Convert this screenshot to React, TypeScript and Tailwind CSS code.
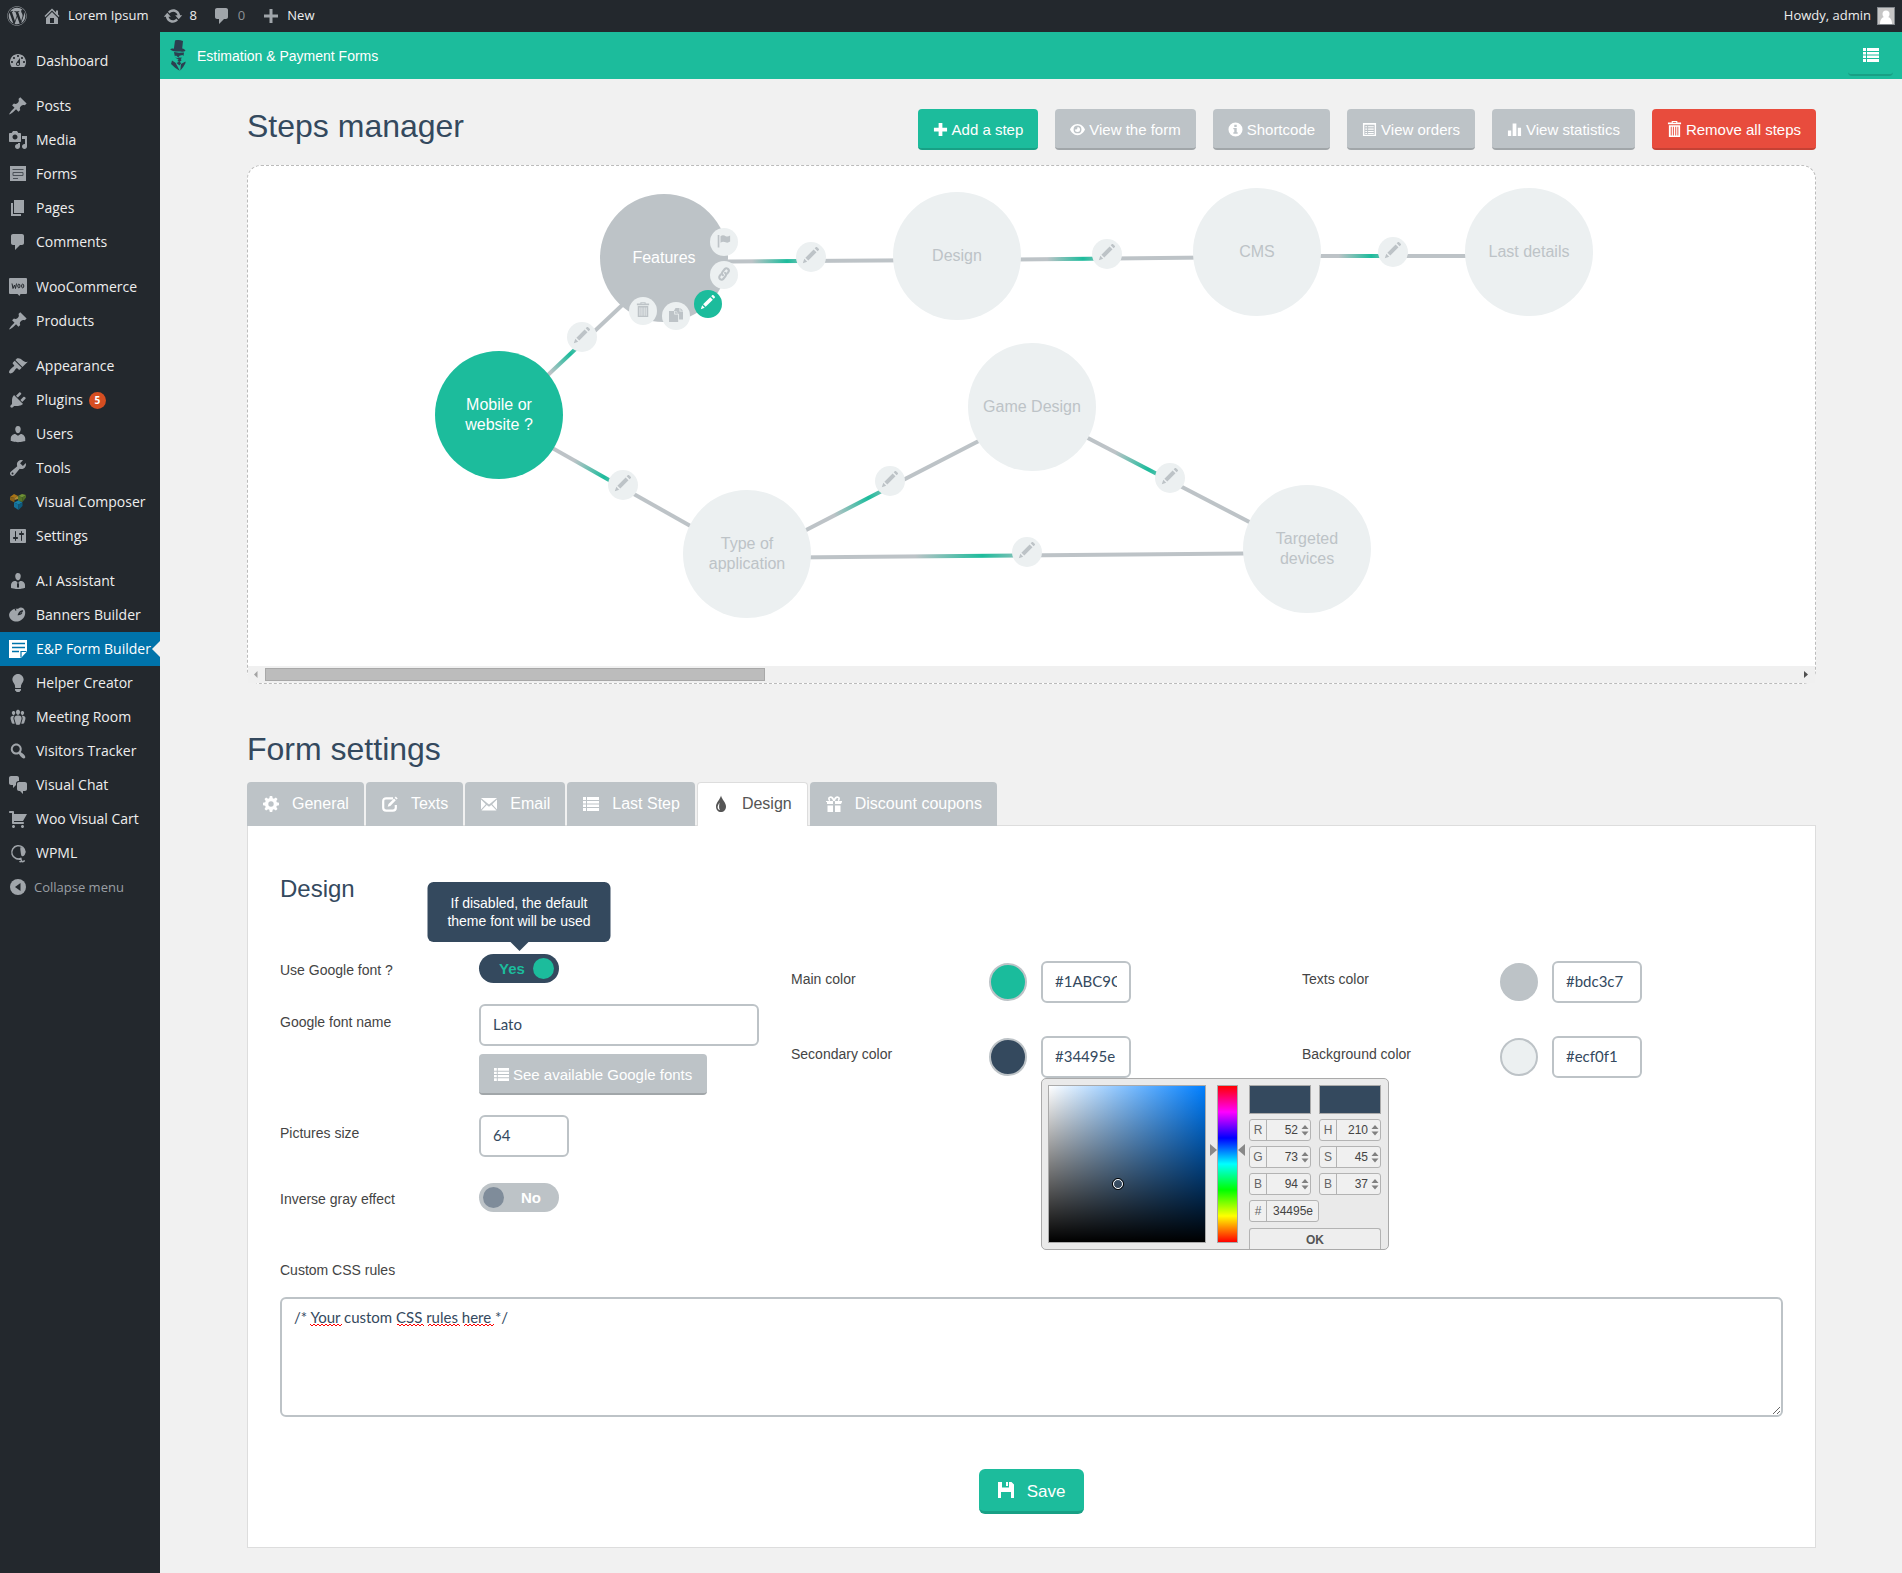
import { useState, type ReactNode } from "react";
import { FaWordpress } from "react-icons/fa";

/* ---------- sidebar icons, drawn on a 20 x 20 grid ---------- */

const DASH = {
  dashboard:
    "M3.76 16h12.48c1.1-1.37 1.76-3.11 1.76-5 0-4.42-3.58-8-8-8s-8 3.58-8 8c0 1.89.66 3.63 1.76 5zM10 4c.55 0 1 .45 1 1s-.45 1-1 1-1-.45-1-1 .45-1 1-1zM6 6c.55 0 1 .45 1 1s-.45 1-1 1-1-.45-1-1 .45-1 1-1zm8 0c.55 0 1 .45 1 1s-.45 1-1 1-1-.45-1-1 .45-1 1-1zm-5.37 5.55L12 7v6c0 1.1-.9 2-2 2s-2-.9-2-2c0-.57.24-1.08.63-1.45zM4 10c.55 0 1 .45 1 1s-.45 1-1 1-1-.45-1-1 .45-1 1-1zm12 0c.55 0 1 .45 1 1s-.45 1-1 1-1-.45-1-1 .45-1 1-1zm-5 3c0-.55-.45-1-1-1s-1 .45-1 1 .45 1 1 1 1-.45 1-1z",
  post: "M10.44 3.02l1.82-1.82 6.36 6.35-1.83 1.82c-1.05-.68-2.48-.57-3.41.36l-.75.75c-.92.93-1.04 2.35-.35 3.41l-1.83 1.82-2.41-2.41-2.8 2.79c-.42.42-3.38 2.71-3.8 2.29s1.86-3.39 2.28-3.81l2.79-2.79L4.1 9.36l1.83-1.82c1.05.69 2.48.57 3.4-.36l.75-.75c.93-.92 1.05-2.35.36-3.41z",
  media:
    "M13 11V4c0-.55-.45-1-1-1h-1.67L9 1H5L3.67 3H2c-.55 0-1 .45-1 1v7c0 .55.45 1 1 1h10c.55 0 1-.45 1-1zM7 4.5c1.38 0 2.5 1.12 2.5 2.5S8.38 9.5 7 9.5 4.5 8.38 4.5 7 5.62 4.5 7 4.5zM14 6h5v10.5c0 1.38-1.12 2.5-2.5 2.5S14 17.88 14 16.5s1.12-2.5 2.5-2.5c.17 0 .34.02.5.05V9h-3V6zm-4 8.05V13h2v3.5c0 1.38-1.12 2.5-2.5 2.5S7 17.88 7 16.5 8.12 14 9.5 14c.17 0 .34.02.5.05z",
  page: "M6 15V2h10v13H6zm-1 1h8v2H3V5h2v11z",
  comments:
    "M5 2h9c1.1 0 2 .9 2 2v7c0 1.1-.9 2-2 2h-2l-5 5v-5H5c-1.1 0-2-.9-2-2V4c0-1.1.9-2 2-2z",
  appearance:
    "M14.48 11.06L7.41 3.99l1.5-1.5c.5-.56 2.3-.47 3.51.32 1.21.8 1.43 1.28 2.91 2.1 1.18.64 2.45 1.26 4.45.85zm-.71.71L6.7 4.7 4.93 6.47c-.39.39-.39 1.02 0 1.41l1.06 1.06c.39.39.39 1.03 0 1.42-.6.6-1.43 1.11-2.21 1.69-.35.26-.7.53-1.01.84C1.43 14.23.4 16.08 1.4 17.07c.99 1 2.84-.03 4.18-1.36.31-.31.58-.66.85-1.02.57-.78 1.08-1.61 1.69-2.21.39-.39 1.02-.39 1.41 0l1.06 1.06c.39.39 1.02.39 1.41 0z",
  plugins:
    "M13.11 4.36L9.87 7.6 8 5.73l3.24-3.24c.35-.34 1.05-.2 1.56.32.52.51.66 1.21.31 1.55zm-8 1.77l.91-1.12 9.01 9.01-1.19.84c-.71.71-2.63 1.16-3.82 1.16H6.14L4.9 17.26c-.59.59-1.54.59-2.12 0-.59-.58-.59-1.53 0-2.12l1.24-1.24v-3.88c0-1.13.4-3.19 1.09-3.89zm7.26 3.97l3.24-3.24c.34-.35 1.04-.21 1.55.31.52.51.66 1.21.31 1.55l-3.24 3.25z",
  users:
    "M10 9.25c-2.27 0-2.73-3.44-2.73-3.44C7 4.02 7.82 2 9.97 2c2.16 0 2.98 2.02 2.71 3.81 0 0-.41 3.44-2.68 3.44zm0 2.57L12.72 10c2.39 0 4.52 2.33 4.52 4.53v2.49s-3.65 1.13-7.24 1.13c-3.65 0-7.24-1.13-7.24-1.13v-2.49c0-2.25 1.94-4.48 4.47-4.48z",
  tools:
    "M16.68 9.77c-1.34 1.34-3.3 1.67-4.95.99l-5.41 6.52c-.99.99-2.59.99-3.58 0s-.99-2.59 0-3.57l6.52-5.42c-.68-1.65-.35-3.61.99-4.95 1.28-1.28 3.12-1.62 4.72-1.06l-2.89 2.89 2.82 2.82 2.86-2.87c.53 1.58.18 3.39-1.08 4.65zM3.81 16.21c.4.39 1.04.39 1.43 0 .4-.4.4-1.04 0-1.43-.39-.4-1.03-.4-1.43 0-.39.39-.39 1.03 0 1.43z",
  settings:
    "M18 16V4c0-.55-.45-1-1-1H3c-.55 0-1 .45-1 1v12c0 .55.45 1 1 1h14c.55 0 1-.45 1-1zM8 11h1c.55 0 1 .45 1 1s-.45 1-1 1H8v1.5c0 .28-.22.5-.5.5s-.5-.22-.5-.5V13H6c-.55 0-1-.45-1-1s.45-1 1-1h1V5.5c0-.28.22-.5.5-.5s.5.22.5.5V11zm5-2h-1c-.55 0-1-.45-1-1s.45-1 1-1h1V5.5c0-.28.22-.5.5-.5s.5.22.5.5V7h1c.55 0 1 .45 1 1s-.45 1-1 1h-1v5.5c0 .28-.22.5-.5.5s-.5-.22-.5-.5V9z",
  home: "M16 8.5l1.53 1.53-1.06 1.06L10 4.6l-6.47 6.49-1.06-1.06L10 2.5l4 4v-2h2v4zm-6-2.46l6 5.99V18H4v-5.97zM12 17v-5H8v5h4z",
  update:
    "M10.2 3.28c3.53 0 6.43 2.61 6.92 6h2.08l-3.5 4-3.5-4h2.32c-.45-1.97-2.21-3.45-4.32-3.45-1.45 0-2.73.71-3.54 1.78L4.95 5.66C6.23 4.2 8.11 3.28 10.2 3.28zm-.4 13.44c-3.52 0-6.43-2.61-6.92-6H.8l3.5-4c1.17 1.33 2.33 2.67 3.5 4H5.48c.45 1.97 2.21 3.45 4.32 3.45 1.45 0 2.73-.71 3.54-1.78l1.71 1.95c-1.28 1.46-3.15 2.38-5.25 2.38z",
  plus: "M17 8.5v3h-5.5V17h-3v-5.5H3v-3h5.5V3h3v5.5z",
  groups:
    "M8.03 4.46c-.29 1.28.55 3.46 1.97 3.46 1.41 0 2.25-2.18 1.96-3.46-.22-.98-1.08-1.63-1.96-1.63-.89 0-1.74.65-1.97 1.63zm-4.13.9c-.25 1.08.47 2.93 1.67 2.93s1.92-1.85 1.67-2.93c-.19-.83-.92-1.39-1.67-1.39s-1.48.56-1.67 1.39zm8.86 0c-.25 1.08.47 2.93 1.66 2.93 1.2 0 1.92-1.85 1.67-2.93-.19-.83-.92-1.39-1.67-1.39-.74 0-1.47.56-1.66 1.39zm-.59 11.43l1.25-4.3C14.2 10 12.71 8.47 10 8.47c-2.72 0-4.21 1.53-3.44 4.02l1.26 4.3C8.05 17.51 9 18 10 18c.98 0 1.94-.49 2.17-1.21zm-6.1-7.63c-.49.67-.96 1.83-.42 3.59l1.12 3.79c-.34.2-.77.31-1.2.31-.85 0-1.65-.41-1.85-1.03l-1.07-3.65c-.65-2.11.61-3.4 2.92-3.4.27 0 .54.02.79.06-.1.1-.2.22-.29.33zm8.35-.39c2.31 0 3.58 1.29 2.92 3.4l-1.07 3.65c-.2.62-1 1.03-1.85 1.03-.43 0-.86-.11-1.2-.31l1.11-3.77c.55-1.78.08-2.94-.42-3.61-.08-.11-.18-.23-.28-.33.25-.04.51-.06.79-.06z",
  search:
    "M12.14 4.18c1.87 1.87 2.11 4.75.72 6.89.12.1.22.21.36.31.2.16.47.36.81.59.34.24.56.39.66.47.42.31.73.57.94.78.32.32.6.65.84 1 .25.35.44.69.59 1.04.14.35.21.68.18 1-.02.32-.14.59-.36.81s-.49.34-.81.36c-.31.02-.65-.04-.99-.19-.35-.14-.7-.34-1.04-.59-.35-.24-.68-.52-1-.84-.21-.21-.47-.52-.77-.93-.1-.13-.25-.35-.47-.66-.22-.32-.4-.57-.56-.78-.16-.2-.29-.35-.44-.5-2.07 1.09-4.69.76-6.44-.98-2.14-2.15-2.14-5.64 0-7.78 2.15-2.15 5.63-2.15 7.78 0zm-1.41 6.36c1.36-1.37 1.36-3.58 0-4.95-1.37-1.37-3.59-1.37-4.95 0-1.37 1.37-1.37 3.58 0 4.95 1.36 1.37 3.58 1.37 4.95 0z",
  bulb: "M10 1c3.11 0 5.63 2.52 5.63 5.62 0 1.84-2.03 4.58-2.03 4.58-.33.44-.6 1.25-.6 1.8v1c0 .55-.45 1-1 1H8c-.55 0-1-.45-1-1v-1c0-.55-.27-1.36-.6-1.8 0 0-2.02-2.74-2.02-4.58C4.38 3.52 6.89 1 10 1zM7 16.87V16h6v.87c0 .62-.13 1.13-.75 1.13H12c0 .62-.4 1-1.02 1h-2c-.61 0-.98-.38-.98-1h-.25c-.62 0-.75-.51-.75-1.13z",
  chat: "M11 6h-.82C9.07 6 8 7.2 8 8.16V10l-3 3v-3H3c-1.1 0-2-.9-2-2V3c0-1.1.9-2 2-2h6c1.1 0 2 .9 2 2v3zm0 1h6c1.1 0 2 .9 2 2v5c0 1.1-.9 2-2 2h-2v3l-3-3h-1c-1.1 0-2-.9-2-2V9c0-1.1.9-2 2-2z",
  cart: "M6 13h9c.55 0 1 .45 1 1s-.45 1-1 1H5c-.55 0-1-.45-1-1V4H2c-.55 0-1-.45-1-1s.45-1 1-1h3c.55 0 1 .45 1 1v2h13l-4 7H6v1zm-.5 3c.83 0 1.5.67 1.5 1.5S6.33 19 5.5 19 4 18.33 4 17.5 4.67 16 5.5 16zm9 0c.83 0 1.5.67 1.5 1.5s-.67 1.5-1.5 1.5-1.5-.67-1.5-1.5.67-1.5 1.5-1.5z",
  business:
    "M7.3 6l-.03-.19c-.04-.37-.05-.73-.03-1.08.02-.36.1-.71.25-1.04.14-.32.31-.61.52-.86s.49-.46.83-.6c.34-.15.72-.23 1.13-.23.69 0 1.26.2 1.71.59s.76.87.91 1.44.18 1.16.09 1.78l-.03.19c-.01.09-.05.25-.11.48-.05.24-.12.47-.2.69-.08.21-.19.45-.34.72-.14.27-.3.49-.47.69-.18.19-.4.34-.67.48-.27.13-.55.19-.86.19s-.59-.06-.87-.19c-.26-.13-.49-.29-.67-.5-.18-.2-.34-.42-.49-.66-.15-.25-.26-.49-.34-.73-.09-.25-.16-.47-.21-.67-.06-.21-.1-.37-.12-.5zm9.2 6.24c.41.7.5 1.41.5 2.14v2.49c0 .03-.12.08-.29.13-.18.04-.42.13-.97.27-.55.12-1.1.24-1.65.34s-1.19.19-1.95.27c-.75.08-1.46.12-2.13.12-.68 0-1.39-.04-2.14-.12-.75-.07-1.4-.17-1.98-.27-.58-.11-1.08-.23-1.56-.34-.49-.11-.8-.21-1.06-.29L3 16.87v-2.49c0-.75.07-1.46.46-2.15s.81-1.25 1.5-1.68C5.66 10.12 7.19 10 8 10l1.67 1.67L9 13v3l1.02 1.08L11 16v-3l-.68-1.33L11.97 10c.77 0 2.2.07 2.9.52.71.45 1.21 1.02 1.63 1.72z",
};

function Dash({ name }: { name: keyof typeof DASH }) {
  return (
    <svg viewBox="0 0 20 20" className="size-5 fill-current" fillRule="evenodd" aria-hidden="true">
      <path d={DASH[name]} />
    </svg>
  );
}

const FormsIcon = () => (
  <svg viewBox="0 0 20 20" className="size-5" aria-hidden="true">
    <rect x="2" y="2" width="16" height="15" className="fill-current" />
    <path d="M4.500 5.500h11M5 8.500h10v3H5zM5 14.500h5" stroke="#4b5157" fill="none" />
  </svg>
);

const WooIcon = () => (
  <svg viewBox="0 0 20 20" className="size-5" aria-hidden="true">
    <path
      d="M2 1h16a1 1 0 0 1 1 1v14a1 1 0 0 1-1 1h-5.500l-1 2-2-2H2a1 1 0 0 1-1-1V2a1 1 0 0 1 1-1z"
      className="fill-current"
    />
    <g stroke="#23282d" strokeWidth="1" fill="none">
      <path d="M4 6.500l1 5 1.500-3.500 1 3.500 1-5" />
      <ellipse cx="10.900" cy="9" rx="1.100" ry="1.900" />
      <ellipse cx="14.700" cy="9" rx="1.100" ry="1.900" />
    </g>
  </svg>
);

const ComposerIcon = () => (
  <svg viewBox="0 0 20 20" className="size-5" aria-hidden="true">
    <path d="M2 5l4-3 4 2-3.500 2z" fill="#a87416" />
    <path d="M2 5l4.500 1v4.500L2 8z" fill="#8a6118" />
    <path d="M6.500 6L10 4v3L6.500 8z" fill="#b08a34" />
    <path d="M10 4l4-2 4 1-3.500 2.500z" fill="#6f9135" />
    <path d="M10 4l4.500 1.500V10l-4.500-1z" fill="#56742a" />
    <path d="M14.500 5.500L18 3v2.500L14.500 10z" fill="#4f6d25" />
    <path d="M6 10.500l4-2 4.500 2-4 2z" fill="#177fa6" />
    <path d="M6 10.500l4.500 2V18L6 15z" fill="#14719a" />
    <path d="M10.500 12.500l4-2V14l-4 4z" fill="#0f5a7c" />
  </svg>
);

const BannersIcon = () => (
  <svg viewBox="0 0 20 20" className="size-5" aria-hidden="true">
    <path
      d="M6 4c2-1.200 3 .6 4.500-.6C12.500 1.800 16 2.500 17 6c1 4-1.500 8.500-5.500 10-4.500 1.600-9.500-.5-10.300-5C.7 7.800 3 5.200 6 4z"
      className="fill-current"
    />
    <path d="M15 6c-2-.2-3.500 1-4.500 3.500 2 0 3-.8 3.500-2" stroke="#23282d" strokeWidth="1.300" fill="none" />
    <path d="M6.500 2.500l1.500 3" stroke="#23282d" strokeWidth="1.200" />
  </svg>
);

const FormBuilderIcon = () => (
  <svg viewBox="0 0 20 20" className="size-5" aria-hidden="true">
    <path d="M1 1h18v11.500L13 19H1z" className="fill-current" />
    <path d="M4 4.500h13M4 8.500h13M4 12.500h7" stroke="#0073aa" strokeWidth="1.300" />
    <path d="M13 18.500v-6h5.500" stroke="#0073aa" strokeWidth="1.200" fill="none" />
  </svg>
);

const WpmlIcon = () => (
  <svg viewBox="0 0 20 20" className="size-5" aria-hidden="true">
    <g fill="none" stroke="currentColor" strokeWidth="1.500">
      <path d="M13.500 15.200A6.600 6.600 0 1 1 17 9.500" />
      <path d="M10.500 16.200c1.800-.2 3.200.2 3 1.700-.1.900-1.500 1-1.700.1M13.500 17.800c.8 1.400 2.800.9 2.800-.6" />
    </g>
    <path d="M12.500 4c3 .5 5.200 3 4.900 5.800-.3 2.300-1.700 3.700-2.900 3.500-1.300-.2-1.500-1.800-1.700-3.300-.2-2-.8-4-.3-6z" className="fill-current" />
  </svg>
);

const CollapseIcon = () => (
  <svg viewBox="0 0 20 20" className="size-5" aria-hidden="true">
    <circle cx="10" cy="10" r="8" className="fill-current" />
    <path d="M12.500 6v8L7 10z" fill="#23282d" />
  </svg>
);

/* ---------- glyph icons, drawn on a 16 x 16 grid ---------- */

const GLYPH: Record<string, ReactNode> = {
  plus: <path d="M6 1h4v5h5v4h-5v5H6v-5H1V6h5z" />,
  eye: (
    <>
      <path
        fillRule="evenodd"
        d="M8 2C4 2 1.200 5 0 8c1.200 3 4 6 8 6s6.800-3 8-6c-1.200-3-4-6-8-6zm0 1.700a4.200 4.200 0 1 1 0 8.400 4.200 4.200 0 0 1 0-8.400z"
      />
      <path d="M8 5.200a2.700 2.700 0 1 1-2.700 2.700c.9.700 2.900-.2 2.700-2.700z" />
    </>
  ),
  info: (
    <path
      fillRule="evenodd"
      d="M8 .5a7.500 7.500 0 1 1 0 15 7.500 7.500 0 0 1 0-15zM6.700 3v2.300h2.600V3zM5.700 6.500v1.300h1V11h-1v1.500h4.600V11h-1V6.500z"
    />
  ),
  listAlt: (
    <path
      fillRule="evenodd"
      d="M1 1h14v14H1zM2.500 3v10.500h11V3zM3.500 4.500h2v1.200h-2zm3 0h6v1.200h-6zm-3 2.500h2v1.200h-2zm3 0h6v1.200h-6zm-3 2.500h2v1.200h-2zm3 0h6v1.200h-6zm-3 2.200h2v1.200h-2zm3 0h6v1.200h-6z"
    />
  ),
  stats: <path d="M1 9h3.500v6H1zM6 1.500h4V15H6zM11.500 6H15v9h-3.500z" />,
  trash: (
    <path
      fillRule="evenodd"
      d="M5 -1h6v1.600h4V2.500H1V.6h4zM6.200 0v.7h3.600V0zM2 3.500h12V16H2zM4 5v9.500h1V5zm2.300 0v9.500h1V5zm2.500 0v9.500h1V5zm2.300 0v9.500h1V5z"
    />
  ),
  flag: (
    <>
      <path d="M.8 1h1.900v14.500H.8z" />
      <path d="M4 2.500c2.500-1.800 4.500-.8 6 0 1.500.7 3 .5 5-.8v7c-2 1.500-3.700 1.500-5.200.8-1.600-.8-3.600-1.300-5.800.5z" />
    </>
  ),
  link: (
    <g fill="none" stroke="currentColor" strokeWidth="2.400" strokeLinecap="round">
      <path d="M6.800 9.300c-1.300-.9-1.500-2.400-.5-3.700l2.400-3c1-1.200 2.500-1.400 3.700-.5s1.400 2.500.5 3.700l-1.300 1.700" />
      <path d="M9.200 6.700c1.300.9 1.500 2.400.5 3.700l-2.400 3c-1 1.200-2.500 1.400-3.700.5s-1.400-2.500-.5-3.700l1.300-1.700" />
    </g>
  ),
  copy: (
    <>
      <path d="M7.500 0H12v4h4v9h-4.500V7.500L8 3.500H5.500z" />
      <path d="M13 0l3 3h-3z" />
      <path d="M0 3.500h6v4h4.500V16H0z" />
      <path d="M7 3.500l3.500 3H7z" />
    </>
  ),
  cog: (
    <path
      fillRule="evenodd"
      d="M6.800 0h2.400l.5 2.200 1.200.5 2-1.200 1.600 1.600-1.200 2 .5 1.200L16 6.800v2.400l-2.200.5-.5 1.200 1.200 2-1.600 1.600-2-1.200-1.200.5L9.200 16H6.800l-.5-2.200-1.200-.5-2 1.200-1.600-1.600 1.200-2-.5-1.200L0 9.200V6.800l2.200-.5.5-1.200-1.200-2 1.600-1.600 2 1.200 1.200-.5zM8 5.300a2.700 2.700 0 1 0 0 5.400 2.700 2.700 0 0 0 0-5.400z"
    />
  ),
  edit: (
    <>
      <path d="M11 2.300H4.200C2.300 2.300 1.200 3.400 1.200 5.200v6.600c0 1.800 1.100 2.900 3 2.900h6.600c1.900 0 3-1.100 3-2.900V9" fill="none" stroke="currentColor" strokeWidth="2.200" />
      <path d="M13.800.5l1.900 1.900-1.200 1.200-1.900-1.900zM12 2.400l1.800 1.800-5.500 5.800-2.600.8.800-2.700z" />
    </>
  ),
  envelope: (
    <>
      <path d="M0 2h16L8 8.500z" />
      <path d="M0 3.500l4.800 4.700L0 13.500zM16 3.500l-4.800 4.700 4.800 5.300z" />
      <path d="M5.700 9L8 10.800 10.300 9l5.200 5.500H.5z" />
    </>
  ),
  thList: (
    <path d="M0 1h3v3H0zm4 0h12v3H4zM0 5h3v2.500H0zm4 0h12v2.500H4zM0 8.500h3V11H0zm4 0h12V11H4zM0 12h3v3H0zm4 0h12v3H4z" />
  ),
  tint: (
    <path
      fillRule="evenodd"
      d="M8 -.5c.8 4 5 7 5 11C13 14 10.800 16 8 16s-5-2-5-5.500C3 6.500 7.200 3.500 8 -.5zM6.500 6.500C5 9 4.200 10.500 4.800 12.300c.4 1.200 1.400 1.900 2.200 1.700C5.500 12 6.200 9.500 6.500 6.500z"
    />
  ),
  gift: (
    <>
      <path d="M0 5h7v3H1V6H0zM9 5h7v1l-1 2H9z" />
      <path d="M1.500 9.500H7V16H1.500zM9 9.500h5.500V16H9z" />
      <path d="M8 5C7 2 5.500.8 4 1.200S2.500 4 4 4.500M8 5c1-3 2.500-4.200 4-3.800s1.500 2.800 0 3.300" fill="none" stroke="currentColor" strokeWidth="1.700" />
    </>
  ),
  floppy: (
    <path d="M0 0h4v5.500h7V0h2.500L16 2.500V16h-3V10H3v6H0zM8 0h2v4H8z" />
  ),
  pencil: (
    <path d="M13.500-.1c.2 0 .3 0 .4.200l2 2c.2.200.2.600 0 .8l-1.300 1.300-2.900-2.900L13 .1c.1-.2.300-.2.500-.2zM13.500 5.300l-8.200 8.200-2.900-2.800 8.200-8.200zM4.200 14.700L-.2 16.200l1.500-4.500z" />
  ),
};

function Glyph({ name, className }: { name: string; className: string }) {
  return (
    <svg viewBox="0 0 16 16" className={`shrink-0 overflow-visible fill-current ${className}`} aria-hidden="true">
      {GLYPH[name]}
    </svg>
  );
}

/* ---------- admin bar and sidebar ---------- */

function AdminBar() {
  return (
    <header className="flex h-8 items-center bg-[#23282d] px-[7px] font-['Open_Sans',sans-serif] text-[13px] text-[#eee]">
      <a href="#wp" aria-label="About WordPress" className="text-[#a0a5aa]">
        <FaWordpress className="size-5" />
      </a>
      <a href="#site" className="ml-[15px] flex items-center gap-[6px]">
        <span className="text-[#a0a5aa]"><Dash name="home" /></span>
        Lorem Ipsum
      </a>
      <a href="#updates" className="ml-[15px] flex items-center gap-[6px]">
        <span className="text-[#a0a5aa]"><Dash name="update" /></span>
        8
      </a>
      <a href="#comments" className="ml-[15px] flex items-center gap-[6px] text-[#8c9196]">
        <span className="text-[#a0a5aa]"><Dash name="comments" /></span>
        0
      </a>
      <a href="#new" className="ml-4 flex items-center gap-[6px]">
        <span className="text-[#a0a5aa]"><Dash name="plus" /></span>
        New
      </a>
      <a href="#profile" className="ml-auto flex items-center gap-[6px]">
        Howdy, admin
        <svg viewBox="0 0 18 18" className="size-[18px]" aria-hidden="true">
          <rect width="18" height="18" fill="#82878c" />
          <rect x="1" y="1" width="16" height="16" fill="#c5c5c5" />
          <circle cx="9" cy="7" r="3.500" fill="#fff" />
          <path d="M3 17c0-5 2.500-6.500 4-7h4c1.500.5 4 2 4 7z" fill="#fff" />
        </svg>
      </a>
    </header>
  );
}

type Item = { label: string; icon: ReactNode; badge?: string; active?: boolean };

const MENU: Item[][] = [
  [{ label: "Dashboard", icon: <Dash name="dashboard" /> }],
  [
    { label: "Posts", icon: <Dash name="post" /> },
    { label: "Media", icon: <Dash name="media" /> },
    { label: "Forms", icon: <FormsIcon /> },
    { label: "Pages", icon: <Dash name="page" /> },
    { label: "Comments", icon: <Dash name="comments" /> },
  ],
  [
    { label: "WooCommerce", icon: <WooIcon /> },
    { label: "Products", icon: <Dash name="post" /> },
  ],
  [
    { label: "Appearance", icon: <Dash name="appearance" /> },
    { label: "Plugins", icon: <Dash name="plugins" />, badge: "5" },
    { label: "Users", icon: <Dash name="users" /> },
    { label: "Tools", icon: <Dash name="tools" /> },
    { label: "Visual Composer", icon: <ComposerIcon /> },
    { label: "Settings", icon: <Dash name="settings" /> },
  ],
  [
    { label: "A.I Assistant", icon: <Dash name="business" /> },
    { label: "Banners Builder", icon: <BannersIcon /> },
    { label: "E&P Form Builder", icon: <FormBuilderIcon />, active: true },
    { label: "Helper Creator", icon: <Dash name="bulb" /> },
    { label: "Meeting Room", icon: <Dash name="groups" /> },
    { label: "Visitors Tracker", icon: <Dash name="search" /> },
    { label: "Visual Chat", icon: <Dash name="chat" /> },
    { label: "Woo Visual Cart", icon: <Dash name="cart" /> },
    { label: "WPML", icon: <WpmlIcon /> },
  ],
];

function Sidebar() {
  return (
    <nav aria-label="Main menu" className="w-40 shrink-0 bg-[#23282d] pt-3 font-['Open_Sans',sans-serif] text-sm text-[#eee]">
      <div className="flex flex-col gap-[11px]">
        {MENU.map((group, i) => (
          <ul key={i}>
            {group.map((item) => (
              <li key={item.label}>
                <a
                  href="#menu"
                  className={
                    item.active
                      ? "relative flex h-[34px] items-center bg-[#0073aa] whitespace-nowrap text-white"
                      : "flex h-[34px] items-center whitespace-nowrap"
                  }
                >
                  <span className={item.active ? "flex w-9 justify-center" : "flex w-9 justify-center text-[#a0a5aa]"}>
                    {item.icon}
                  </span>
                  {item.label}
                  {item.badge && (
                    <span className="ml-[6px] flex size-[17px] items-center justify-center rounded-full bg-[#d54e21] text-[10px] font-bold text-white">
                      {item.badge}
                    </span>
                  )}
                  {item.active && (
                    <span className="absolute top-[9px] right-0 border-y-8 border-r-8 border-y-transparent border-r-[#f1f1f1]" />
                  )}
                </a>
              </li>
            ))}
          </ul>
        ))}
      </div>
      <button type="button" className="flex h-[34px] items-center text-[13px] text-[#a0a5aa]">
        <span className="flex w-9 justify-center"><CollapseIcon /></span>
        <span className="-ml-0.5 text-[#9a9fa4]">Collapse menu</span>
      </button>
    </nav>
  );
}

function PluginBar() {
  return (
    <div className="flex h-[47px] items-center bg-[#1cbc9c] pr-[9px] pl-[10px] text-sm text-white">
      <svg viewBox="0 0 16 31" className="h-[31px] w-4" fill="#2c3e50" aria-hidden="true">
        <path d="M5 .5c2.500-.7 5-.6 8 .4l-.8 7.600c1.500.4 2.800 1 3.300 2.200-1.500 1.300-4 1-6 .9C6 11.500 2 11.500.2 9.200c1-.9 2.300-.9 3.700-.5z" />
        <path d="M4 12l5 .8 5-.3-.5 3.500-1-.9-3 .6-1.200 1.700L6 15.500l-1.200.8z" />
        <path d="M5 17.500l2.500.6 1.700-.5 3 .2-1.600 1.200 1 1.300-2 1.700-2.200-1 1.200-1.400z" />
        <path d="M2 20.500l3.500 2.200 4.300 8.100C6.500 29 3.500 26.500 1 24zM15.500 21.500L11 24l-.7 6.500c2.200-2.300 3.800-4.500 5.200-7.500z" />
        <path d="M6.500 23l3-1.400 1.600 1.600-1.600 2.300z" />
      </svg>
      <span className="ml-[11px]">Estimation &amp; Payment Forms</span>
      <button
        type="button"
        aria-label="Forms list"
        className="ml-auto flex h-[41px] w-[45px] items-center justify-center rounded border-b-2 border-[#18a085]"
      >
        <Glyph name="thList" className="size-4" />
      </button>
    </div>
  );
}

/* ---------- steps manager ---------- */

function Action({ icon, label, tone = "gray" }: { icon: string; label: string; tone?: "gray" | "teal" | "red" }) {
  const tones = {
    gray: "bg-[#bdc3c7] border-[#a1a6a9]",
    teal: "bg-[#1cbc9c] border-[#18a085]",
    red: "bg-[#e84c3d] border-[#c54134]",
  };
  return (
    <button
      type="button"
      className={`flex h-[41px] items-center gap-1 rounded border-b-2 px-[15px] pt-0.5 text-[15px] leading-[21px] whitespace-nowrap text-white ${tones[tone]}`}
    >
      <Glyph name={icon} className="size-[15px]" />
      {label}
    </button>
  );
}

type Step = { label: string; x: number; y: number; tone: "soft" | "gray" | "teal" };

/* Left and top corner of each 128px disc on the canvas. */
const STEPS: Step[] = [
  { label: "Features", x: 352, y: 28, tone: "gray" },
  { label: "Mobile or website ?", x: 187, y: 185, tone: "teal" },
  { label: "Design", x: 645, y: 26, tone: "soft" },
  { label: "CMS", x: 945, y: 22, tone: "soft" },
  { label: "Last details", x: 1217, y: 22, tone: "soft" },
  { label: "Game Design", x: 720, y: 177, tone: "soft" },
  { label: "Type of application", x: 435, y: 324, tone: "soft" },
  { label: "Targeted devices", x: 995, y: 319, tone: "soft" },
];

const STEP_TONE = {
  soft: "bg-[#ecf0f1] text-[#bdc3c7]",
  gray: "bg-[#bdc3c7] text-white",
  teal: "bg-[#1cbc9c] text-white",
};

/* x1, y1, x2, y2 of a link, then the centre of its edit button. */
const LINKS = [
  [252, 254, 419, 97, 334, 171],
  [251, 252, 501, 393, 375, 319],
  [416, 96, 709, 94, 563, 91],
  [709, 94, 1009, 91, 859, 88],
  [1009, 90, 1281, 90, 1145, 86],
  [500, 394, 787, 246, 642, 315],
  [784, 243, 1061, 387, 922, 312],
  [499, 392, 1059, 387, 779, 386],
];

const TOOLS = [
  { icon: "flag", label: "Start step", x: 476, y: 76 },
  { icon: "link", label: "Link step", x: 476, y: 109 },
  { icon: "pencil", label: "Edit step", x: 460, y: 138, main: true },
  { icon: "trash", label: "Delete step", x: 395, y: 145 },
  { icon: "copy", label: "Duplicate step", x: 428, y: 150 },
];

function StepsCanvas() {
  return (
    <div className="mt-[15px] rounded-[14px] border border-dashed border-[#bbb] bg-white">
      <div className="relative h-[500px] overflow-hidden rounded-t-[13px]">
        <svg className="absolute inset-0 size-full" aria-hidden="true">
          {LINKS.map(([x1, y1, x2, y2], i) => (
            <g key={i}>
              <linearGradient id={`link-${i}`} gradientUnits="userSpaceOnUse" x1={x1} y1={y1} x2={x2} y2={y2}>
                <stop offset="0.3" stopColor="#bdc3c7" />
                <stop offset="0.42" stopColor="#1cbc9c" />
                <stop offset="0.52" stopColor="#bdc3c7" />
              </linearGradient>
              <path d={`M${x1} ${y1}L${x2} ${y2}`} stroke={`url(#link-${i})`} strokeWidth="4" />
            </g>
          ))}
        </svg>
        {LINKS.map(([, , , , x, y], i) => (
          <button
            key={i}
            type="button"
            aria-label="Edit link"
            style={{ left: x - 15, top: y - 15 }}
            className="absolute flex size-[30px] items-center justify-center rounded-full bg-[#ecf0f1] pb-1 text-[#bdc3c7]"
          >
            <Glyph name="pencil" className="size-4" />
          </button>
        ))}
        {STEPS.map((s) => (
          <button
            key={s.label}
            type="button"
            style={{ left: s.x, top: s.y }}
            className={`absolute flex size-32 items-center justify-center rounded-full px-3 text-center text-base leading-5 ${STEP_TONE[s.tone]}`}
          >
            {s.label}
          </button>
        ))}
        {TOOLS.map((t) => (
          <button
            key={t.label}
            type="button"
            aria-label={t.label}
            style={{ left: t.x - 14, top: t.y - 14 }}
            className={
              t.main
                ? "absolute flex size-7 items-center justify-center rounded-full bg-[#1cbc9c] pb-1 text-white"
                : "absolute flex size-7 items-center justify-center rounded-full bg-[#ecf0f1] pb-0.5 text-[#bdc3c7]"
            }
          >
            <Glyph name={t.icon} className="size-[14px]" />
          </button>
        ))}
      </div>
      <div className="flex h-[17px] items-center bg-[#f0f0f0]">
        <svg viewBox="0 0 17 17" className="size-[17px]" aria-hidden="true">
          <path d="M9.500 5v7L6 8.500z" fill="#a3a3a3" />
        </svg>
        <div className="flex-1">
          <div className="h-[13px] w-[500px] border border-[#a8a8a8] bg-[#bcbcbc]" />
        </div>
        <svg viewBox="0 0 17 17" className="size-[17px]" aria-hidden="true">
          <path d="M6 5v7l4-3.500z" fill="#505050" />
        </svg>
      </div>
    </div>
  );
}

/* ---------- form settings ---------- */

const TABS = [
  { icon: "cog", label: "General" },
  { icon: "edit", label: "Texts" },
  { icon: "envelope", label: "Email" },
  { icon: "thList", label: "Last Step" },
  { icon: "tint", label: "Design" },
  { icon: "gift", label: "Discount coupons" },
];

function Tabs() {
  return (
    <div role="tablist" className="relative mt-[15px] -mb-px flex gap-0.5">
      {TABS.map((t) => (
        <button
          key={t.label}
          type="button"
          role="tab"
          aria-selected={t.label === "Design"}
          className={
            t.label === "Design"
              ? "flex h-11 items-center gap-[13px] rounded-t border border-b-0 border-[#ddd] bg-white px-[15px] pb-px text-base text-[#555]"
              : "flex h-11 items-center gap-[13px] rounded-t bg-[#bdc3c7] pr-[15px] pl-4 text-base text-white"
          }
        >
          <Glyph name={t.icon} className="size-4" />
          {t.label}
        </button>
      ))}
    </div>
  );
}

const FIELD =
  "h-[42px] rounded-md border-2 border-[#bdc3c7] bg-white px-3 pb-0.5 font-['Lato',sans-serif] text-[15px] text-[#34495e] outline-none";

function Toggle({ id, on }: { id: string; on: boolean }) {
  const [checked, setChecked] = useState(on);
  return (
    <span className="relative inline-flex">
      <input
        id={id}
        type="checkbox"
        role="switch"
        checked={checked}
        onChange={(e) => setChecked(e.target.checked)}
        className="h-[29px] w-20 appearance-none rounded-full bg-[#bdc3c7] checked:bg-[#34495e]"
      />
      <span
        className={
          checked
            ? "pointer-events-none absolute top-1 left-5 text-[15px] leading-[21px] font-bold text-[#1cbc9c]"
            : "pointer-events-none absolute top-1 right-[18px] text-[15px] leading-[21px] font-bold text-white"
        }
      >
        {checked ? "Yes" : "No"}
      </span>
      <span
        className={
          checked
            ? "pointer-events-none absolute top-1 right-[5px] size-[21px] rounded-full bg-[#1cbc9c]"
            : "pointer-events-none absolute top-1 left-1 size-[21px] rounded-full bg-[#7f8c9a]"
        }
      />
    </span>
  );
}

function PickerField({ id, letter, value, wide }: { id: string; letter: string; value: string; wide?: boolean }) {
  return (
    <div
      className={
        wide
          ? "flex h-[22px] w-[70px] items-center rounded-[3px] border border-[#b3b3b3] bg-[#f0f0f0] text-xs"
          : "flex h-[22px] w-[62px] items-center rounded-[3px] border border-[#b3b3b3] bg-[#f0f0f0] text-xs"
      }
    >
      <label htmlFor={id} className="flex h-full w-[17px] items-center justify-center border-r border-[#b3b3b3] text-[#666]">
        {letter}
      </label>
      <input
        id={id}
        defaultValue={value}
        className={
          wide
            ? "w-0 flex-1 bg-transparent pr-[5px] text-right text-[#444] outline-none"
            : "w-0 flex-1 bg-transparent pr-0.5 text-right text-[#444] outline-none"
        }
      />
      {!wide && (
        <svg viewBox="0 0 10 12" className="h-3 w-[10px]" fill="#808080" aria-hidden="true">
          <path d="M5 1l3.500 4h-7zM5 11.500l3.500-4h-7z" />
        </svg>
      )}
    </div>
  );
}

function ColorPicker() {
  return (
    <div className="absolute top-full left-0 z-10 flex h-[172px] w-[348px] overflow-hidden rounded-[5px] border border-[#aaa] bg-[#eaeaea] pt-1.5 pl-1.5">
      <div className="relative size-[158px] shrink-0 border border-[#aaa] bg-[linear-gradient(to_bottom,transparent,#000),linear-gradient(to_right,#fff,#007fff)]">
        <span className="absolute top-[92px] left-[63px] size-3 rounded-full border border-black">
          <span className="block size-full rounded-full border border-white" />
        </span>
      </div>
      <div className="relative ml-[11px] h-[158px] w-[21px] shrink-0 border border-[#aaa] bg-[linear-gradient(to_bottom,#f00,#f0f,#00f,#0ff,#0f0,#ff0,#f00)]">
        <span className="absolute top-[58px] -left-2 border-y-[6px] border-l-[7px] border-y-transparent border-l-[#888]" />
        <span className="absolute top-[58px] -right-2 border-y-[6px] border-r-[7px] border-y-transparent border-r-[#888]" />
      </div>
      <div className="ml-[11px] w-[132px] shrink-0">
        <div className="grid grid-cols-2 gap-x-2">
          <div className="h-[29px] border border-[#aaa] bg-[#34495e]" />
          <div className="h-[29px] border border-[#aaa] bg-[#34495e]" />
        </div>
        <div className="mt-[5px] grid grid-cols-2 gap-x-2 gap-y-[5px]">
          <PickerField id="rgb-r" letter="R" value="52" />
          <PickerField id="hsb-h" letter="H" value="210" />
          <PickerField id="rgb-g" letter="G" value="73" />
          <PickerField id="hsb-s" letter="S" value="45" />
          <PickerField id="rgb-b" letter="B" value="94" />
          <PickerField id="hsb-b" letter="B" value="37" />
          <PickerField id="hex" letter="#" value="34495e" wide />
        </div>
        <button
          type="button"
          className="mt-1.5 block h-[22px] w-full rounded-t-[3px] border border-b-0 border-[#b3b3b3] bg-[#eee] text-xs font-bold text-[#555]"
        >
          OK
        </button>
      </div>
    </div>
  );
}

const SWATCH = {
  teal: "bg-[#1abc9c]",
  navy: "bg-[#34495e]",
  gray: "bg-[#bdc3c7]",
  pale: "bg-[#ecf0f1]",
};

function ColorRow({
  id,
  label,
  value,
  swatch,
  picker,
}: {
  id: string;
  label: string;
  value: string;
  swatch: keyof typeof SWATCH;
  picker?: boolean;
}) {
  return (
    <div className="flex h-[42px]">
      <label htmlFor={id} className="w-[198px] shrink-0 pt-2">{label}</label>
      <span className={`mt-0.5 size-[38px] shrink-0 rounded-full border-2 border-[#bdc3c7] ${SWATCH[swatch]}`} />
      <div className="relative ml-[14px]">
        <input id={id} defaultValue={value} className={`w-[90px] ${FIELD}`} />
        {picker && <ColorPicker />}
      </div>
    </div>
  );
}

function DesignPanel() {
  return (
    <section className="border border-[#ddd] bg-white px-8 pt-[49px] pb-[33px]">
      <h3 className="text-2xl leading-7 text-[#34495e]">Design</h3>
      <div className="-mx-[15px] mt-[51px] grid grid-cols-3 text-sm leading-5 text-[#444]">
        <div className="px-[15px]">
          <div className="flex">
            <label htmlFor="google-font" className="w-[199px] shrink-0 pt-1.5">Use Google font ?</label>
            <div className="relative flex">
              <Toggle id="google-font" on />
              <div
                role="tooltip"
                className="absolute bottom-full left-1/2 mb-3 w-[183px] -translate-x-1/2 rounded-md bg-[#34495e] px-3 py-3 text-center text-sm leading-[18px] text-white"
              >
                If disabled, the default theme font will be used
                <span className="absolute top-full left-1/2 -translate-x-1/2 border-x-[9px] border-t-[9px] border-x-transparent border-t-[#34495e]" />
              </div>
            </div>
          </div>
          <div className="mt-[21px] flex">
            <label htmlFor="font-name" className="w-[199px] shrink-0 pt-2">Google font name</label>
            <div className="flex flex-col items-start gap-2">
              <input id="font-name" defaultValue="Lato" className={`w-[280px] ${FIELD}`} />
              <Action icon="thList" label="See available Google fonts" />
            </div>
          </div>
          <div className="mt-5 flex">
            <label htmlFor="picture-size" className="w-[199px] shrink-0 pt-2">Pictures size</label>
            <input id="picture-size" defaultValue="64" className={`w-[90px] ${FIELD}`} />
          </div>
          <div className="mt-[26px] flex">
            <label htmlFor="inverse-gray" className="w-[199px] shrink-0 pt-1.5">Inverse gray effect</label>
            <Toggle id="inverse-gray" on={false} />
          </div>
        </div>
        <div className="flex flex-col gap-[33px] px-[15px] pt-[7px]">
          <ColorRow id="main-color" label="Main color" value="#1ABC9C" swatch="teal" />
          <ColorRow id="secondary-color" label="Secondary color" value="#34495e" swatch="navy" picker />
        </div>
        <div className="flex flex-col gap-[33px] px-[15px] pt-[7px]">
          <ColorRow id="texts-color" label="Texts color" value="#bdc3c7" swatch="gray" />
          <ColorRow id="background-color" label="Background color" value="#ecf0f1" swatch="pale" />
        </div>
      </div>
      <label htmlFor="custom-css" className="mt-12 block text-sm leading-5 text-[#444]">Custom CSS rules</label>
      <div className="relative mt-[17px]">
        <textarea
          id="custom-css"
          defaultValue="/* Your custom CSS rules here */"
          className="block h-[120px] w-full rounded-md border-2 border-[#bdc3c7] bg-white px-3 py-2 font-['Lato',sans-serif] text-[15px] leading-[21px] text-[#34495e] outline-none"
        />
        <svg className="pointer-events-none absolute top-[26px] left-0 h-1 w-60" aria-hidden="true">
          <defs>
            <pattern id="squiggle" width="4" height="4" patternUnits="userSpaceOnUse">
              <path d="M0 3L2 1L4 3" fill="none" stroke="#f00" />
            </pattern>
          </defs>
          <path d="M30 0h32v4H30zM117 0h27v4h-27zM148 0h32v4h-32zM184 0h30v4h-30z" fill="url(#squiggle)" />
        </svg>
      </div>
      <div className="mt-[52px] flex justify-center">
        <button
          type="button"
          className="flex h-[45px] items-center gap-[13px] rounded-md border-b-[3px] border-[#18a085] bg-[#1cbc9c] px-[19px] pt-[3px] text-[17px] text-white"
        >
          <Glyph name="floppy" className="mb-1 size-4" />
          Save
        </button>
      </div>
    </section>
  );
}

export default function App() {
  return (
    <div className="flex min-h-screen flex-col bg-[#f1f1f1] font-['Liberation_Sans',Arial,sans-serif]">
      <AdminBar />
      <div className="flex flex-1">
        <Sidebar />
        <div className="min-w-0 flex-1">
          <PluginBar />
          <main className="pt-[29px] pr-[86px] pb-[25px] pl-[87px]">
            <div className="flex items-start justify-between">
              <h1 className="text-[32px] leading-9 text-[#34495e]">Steps manager</h1>
              <div className="flex gap-[17px] pt-px">
                <Action icon="plus" label="Add a step" tone="teal" />
                <Action icon="eye" label="View the form" />
                <Action icon="info" label="Shortcode" />
                <Action icon="listAlt" label="View orders" />
                <Action icon="stats" label="View statistics" />
                <Action icon="trash" label="Remove all steps" tone="red" />
              </div>
            </div>
            <StepsCanvas />
            <h2 className="mt-[47px] text-[32px] leading-9 text-[#34495e]">Form settings</h2>
            <Tabs />
            <DesignPanel />
          </main>
        </div>
      </div>
    </div>
  );
}
